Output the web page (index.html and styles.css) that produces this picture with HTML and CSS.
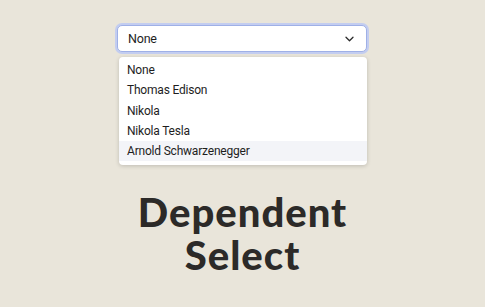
FILE: index.html
```html
<!DOCTYPE html>
<html>
<head>
<meta charset="utf-8">
<link rel="stylesheet" href="styles.css">
</head>
<body>
<div class="page">
  <div class="combo">
    <div class="select">
      <span class="value">None</span>
      <svg class="chev" width="9" height="6" viewBox="0 0 9 6"><path d="M1 1.2l3.5 3.5 3.5-3.5" fill="none" stroke="#2b2b2b" stroke-width="1.3" stroke-linecap="round" stroke-linejoin="round"/></svg>
    </div>
    <ul class="menu">
      <li>None</li>
      <li>Thomas Edison</li>
      <li>Nikola</li>
      <li>Nikola Tesla</li>
      <li class="active">Arnold Schwarzenegger</li>
    </ul>
  </div>
  <h1 class="title"><span class="line">Dependent</span><span class="line">Select</span></h1>
</div>
</body>
</html>
```
FILE: styles.css
```css
html, body {
  margin: 0;
  padding: 0;
  background: #e9e5da;
  width: 485px;
  height: 307px;
  overflow: hidden;
}
.page {
  display: flex;
  flex-direction: column;
  align-items: center;
  padding-top: 25px;
}
.combo {
  width: 251px;
  display: flex;
  flex-direction: column;
  gap: 5px;
}
.select {
  box-sizing: border-box;
  height: 27px;
  margin: 0 1px 0 0;
  background: #fff;
  border: 1px solid #9fb0e6;
  border-radius: 5px;
  box-shadow: 0 0 0 2px #c3cdf0;
  display: flex;
  align-items: center;
  justify-content: space-between;
  padding: 0 12px 0 10px;
  font-family: Roboto, "Liberation Sans", Arial, sans-serif;
  font-size: 12.5px;
  letter-spacing: -0.2px;
  color: #1e1e1e;
}
.chev { display: block; }
.menu {
  list-style: none;
  margin: 0 1px 0 2px;
  padding: 3px 0 4px;
  background: #fff;
  border-radius: 4px;
  box-shadow: 0 1px 4px rgba(0,0,0,0.18);
  font-family: Roboto, "Liberation Sans", Arial, sans-serif;
  font-size: 12px;
  letter-spacing: -0.2px;
  color: #1e1e1e;
}
.menu li {
  height: 20.3px;
  line-height: 20.3px;
  padding-left: 8px;
}
.menu li.active { background: #f3f4f8; }
.title {
  margin: 26px 0 0;
  font-family: Lato, "Noto Sans", sans-serif;
  font-weight: 900;
  font-size: 40px;
  line-height: 43px;
  text-align: center;
  color: #2c2a28;
  letter-spacing: 1px;
  display: flex;
  flex-direction: column;
  align-items: center;
}
.line {
  display: block;
  height: 43px;
}
```
